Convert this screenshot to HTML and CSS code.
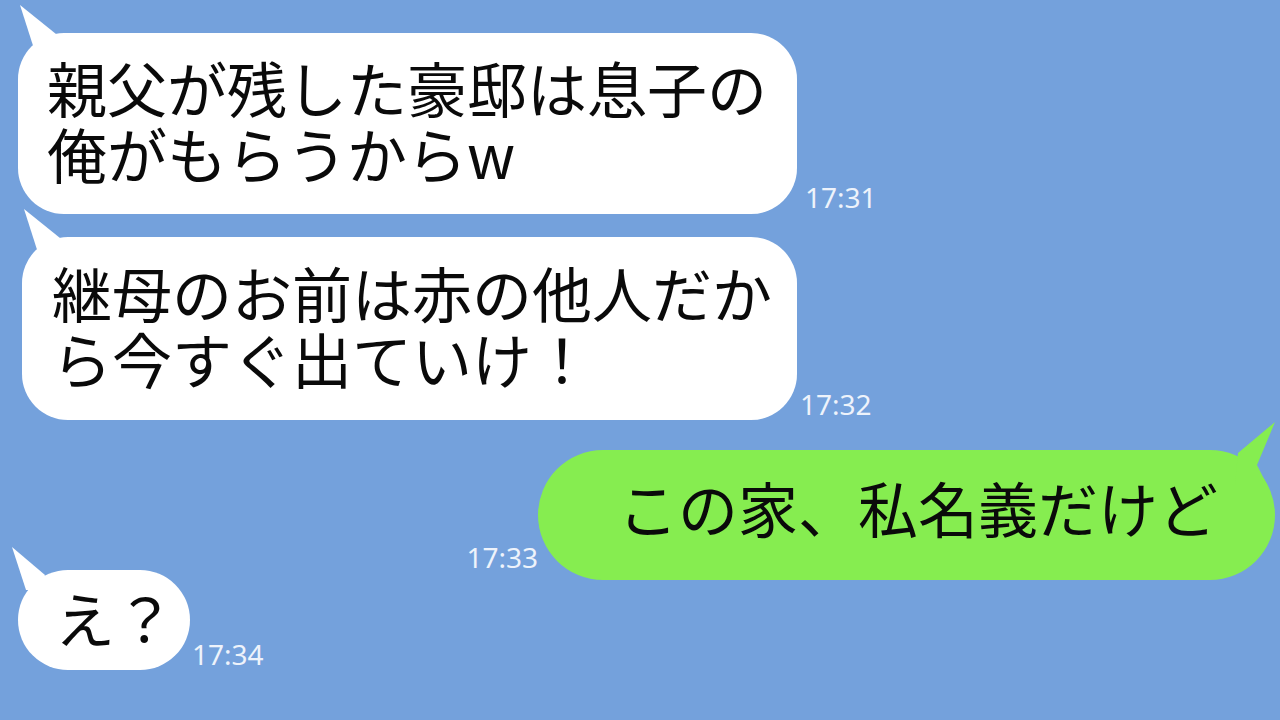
FILE: index.html
```html
<!DOCTYPE html>
<html lang="ja">
<head>
<meta charset="utf-8">
<title>chat</title>
<link rel="stylesheet" href="styles.css">
</head>
<body>
<div class="chat">
  <div class="row row-in">
    <div class="bubble bubble-white b1">
      <svg class="tail tail-in" viewBox="0 0 45 60"><polygon points="2,2 38,31 32,50 18,52"/></svg>
      親父が残した豪邸は息子の<br>俺がもらうからw
    </div>
    <span class="time t1">17:31</span>
  </div>
  <div class="row row-in r2">
    <div class="bubble bubble-white b2">
      <svg class="tail tail-in" viewBox="0 0 45 60"><polygon points="2,2 38,31 32,50 18,52"/></svg>
      継母のお前は赤の他人だか<br>ら今すぐ出ていけ！
    </div>
    <span class="time t2">17:32</span>
  </div>
  <div class="row row-out r3">
    <span class="time t3">17:33</span>
    <div class="bubble bubble-green b3">
      <svg class="tail tail-out" viewBox="0 0 50 70"><polygon points="50,2 32,45 42,65 10,65 13,33"/></svg>
      この家、私名義だけど
    </div>
  </div>
  <div class="row row-in r4">
    <div class="bubble bubble-white b4">
      <svg class="tail tail-small" viewBox="0 0 45 50"><polygon points="4,2 37,30 30,45 18,45"/></svg>
      え？
    </div>
    <span class="time t4">17:34</span>
  </div>
</div>
</body>
</html>
```
FILE: styles.css
```css
html, body {
  margin: 0;
  padding: 0;
}
body {
  width: 1280px;
  height: 720px;
  overflow: hidden;
  background: #74a1dc;
  font-family: "Noto Sans CJK JP", "Noto Sans", sans-serif;
}
.chat {
  display: flex;
  flex-direction: column;
  padding-top: 33px;
}
.row {
  display: flex;
  align-items: flex-end;
}
.row-out {
  justify-content: flex-end;
  padding-right: 5px;
}
.r2 { margin-top: 23px; }
.r3 { margin-top: 30px; }
.r4 { margin-top: -10px; }

.bubble {
  position: relative;
  font-size: 60px;
  line-height: 66px;
  color: #0a0a0a;
  white-space: nowrap;
}
.bubble-white { background: #ffffff; fill: #ffffff; }
.bubble-green { background: #86ed50; fill: #86ed50; }

.b1 {
  margin-left: 18px;
  padding: 21px 30px 28px 29px;
  border-radius: 46px;
}
.b2 {
  margin-left: 22px;
  padding: 22px 25px 29px 30px;
  border-radius: 46px;
}
.b3 {
  padding: 24px 57px 40px 80px;
  border-radius: 65px;
}
.b4 {
  margin-left: 18px;
  padding: 14px 15px 20px 37px;
  border-radius: 50px;
}

.tail {
  position: absolute;
  overflow: visible;
}
.tail-in {
  left: 0;
  top: -30px;
  width: 45px;
  height: 60px;
}
.tail-small {
  left: -10px;
  top: -25px;
  width: 45px;
  height: 50px;
}
.tail-out {
  right: 0;
  top: -30px;
  width: 50px;
  height: 70px;
}

.time {
  font-family: "Noto Sans", sans-serif;
  font-size: 28px;
  line-height: 28px;
  color: #eef3fb;
  margin: 0 0 2px 4px;
}
.t1 { margin-left: 8px; margin-bottom: 3px; }
.t2 { margin-left: 3px; }
.t3 { margin: 0 0 9px 0; }
.t4 { margin-left: 2px; }
```
